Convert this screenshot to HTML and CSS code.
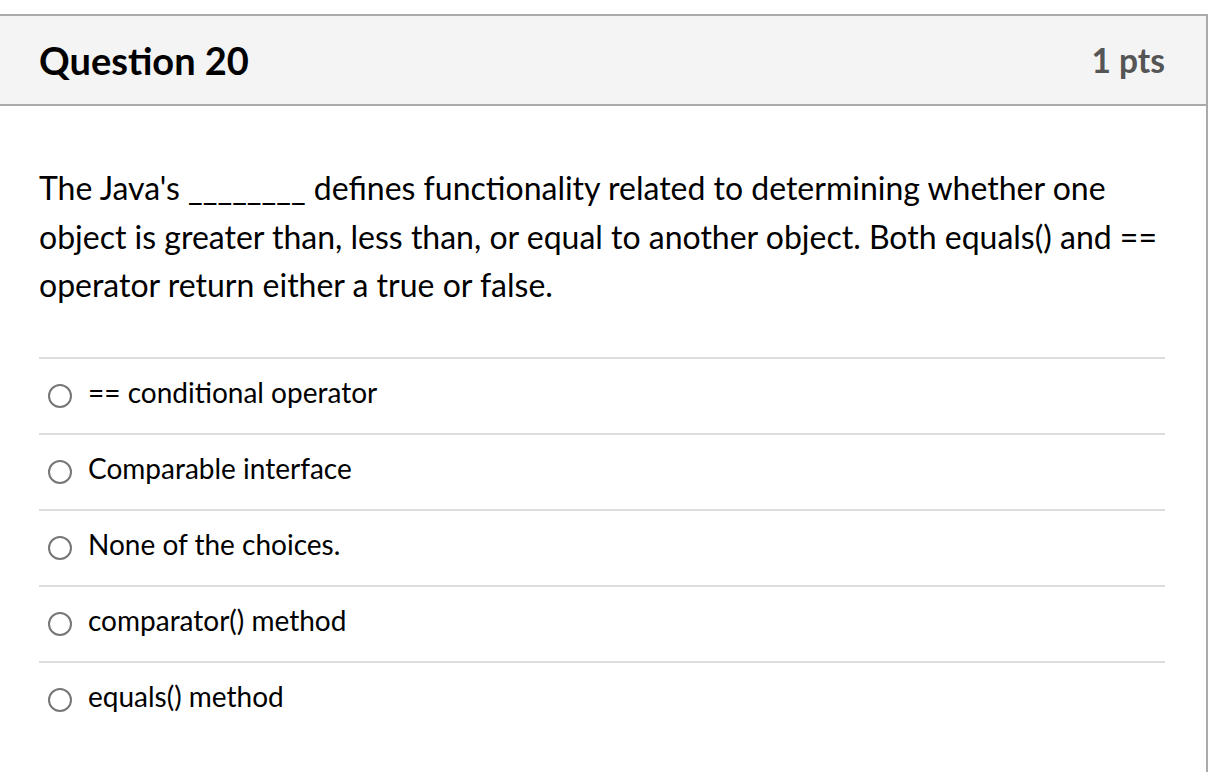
FILE: index.html
```html
<!DOCTYPE html>
<html>
<head>
<meta charset="utf-8">
<link rel="stylesheet" href="styles.css">
</head>
<body>
<div class="question">
  <div class="header">
    <h2 class="title">Question 20</h2>
    <div class="pts">1 pts</div>
  </div>
  <div class="content">
    <p class="text">The Java's ________ defines functionality related to determining whether one object is greater than, less than, or equal to another object. Both equals() and == operator return either a true or false.</p>
    <div class="answers">
      <label class="answer"><span class="radio"></span><span class="label">== conditional operator</span></label>
      <label class="answer"><span class="radio"></span><span class="label">Comparable interface</span></label>
      <label class="answer"><span class="radio"></span><span class="label">None of the choices.</span></label>
      <label class="answer"><span class="radio"></span><span class="label">comparator() method</span></label>
      <label class="answer"><span class="radio"></span><span class="label">equals() method</span></label>
    </div>
  </div>
</div>
</body>
</html>
```
FILE: styles.css
```css
html, body {
  margin: 0;
  padding: 0;
  background: #fff;
  font-family: Lato, "Liberation Sans", sans-serif;
  color: #000;
  overflow: hidden;
}
.question {
  margin-top: 14px;
  width: 1206px;
  border-top: 2px solid #aaaaaa;
  border-right: 2px solid #aaaaaa;
  height: 760px;
}
.header {
  display: flex;
  justify-content: space-between;
  align-items: center;
  height: 88px;
  background: #f4f4f4;
  border-bottom: 2px solid #aaaaaa;
  padding: 0 41px 0 39px;
}
.title {
  margin: 0;
  font-size: 38px;
  font-weight: 700;
  color: #000;
}
.pts {
  font-size: 33.5px;
  font-weight: 700;
  color: #555;
}
.content {
  padding: 58px 41px 0 39px;
}
.text {
  margin: 0;
  font-size: 32px;
  line-height: 48.5px;
}
.answers {
  margin-top: 47px;
}
.answer {
  display: flex;
  align-items: center;
  height: 74px;
  border-top: 2px solid #dddddd;
}
.radio {
  width: 20px;
  height: 20px;
  border: 2px solid #777;
  border-radius: 50%;
  margin-left: 9px;
  margin-right: 16px;
  flex-shrink: 0;
}
.label {
  font-size: 28px;
  margin-bottom: 7px;
}
```
